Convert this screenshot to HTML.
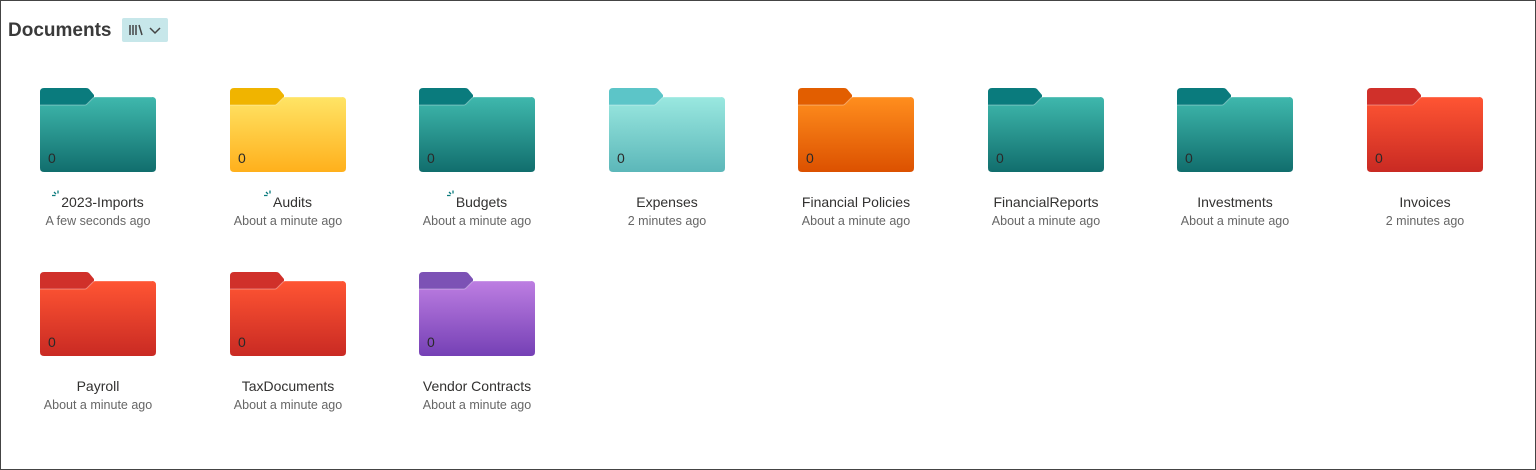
<!DOCTYPE html>
<html><head><meta charset="utf-8"><style>
html,body{margin:0;padding:0;}
body{width:1536px;height:470px;position:relative;background:#fff;font-family:"Liberation Sans",sans-serif;overflow:hidden;}
.frame{position:absolute;left:0;top:0;width:1534px;height:468px;border:1px solid #444;}
h1{position:absolute;left:8px;top:20px;margin:0;font-size:19px;font-weight:bold;color:#3a3a3a;}
.vb{position:absolute;left:122px;top:18px;width:46px;height:24px;background:#c7e7ea;border-radius:2px;}
.card{position:absolute;width:190px;}
.fold{position:absolute;left:37px;top:0;}
.zero{position:absolute;left:45px;top:62px;font-size:14px;color:#2a2a2a;}
.name{position:absolute;top:106px;left:0;width:100%;text-align:center;font-size:14px;color:#323130;}
.date{position:absolute;top:126px;left:0;width:100%;text-align:center;font-size:12.5px;color:#666;}
.spin{display:inline-block;width:9px;height:10px;vertical-align:top;margin-top:-4px;margin-right:0px;}
</style></head><body>
<div class="frame"></div>
<h1>Documents</h1>
<div class="vb"><svg width="46" height="24"><g stroke="#444" stroke-width="1.5" fill="none"><path d="M8 7v10M11 7v10M14 7v10M17 7l3 10"/><path d="M28 10l5 5 5-5"/></g></svg></div>
<svg width="0" height="0" style="position:absolute"><defs>
<linearGradient id="gt" x1="0" y1="0" x2="0" y2="1"><stop offset="0" stop-color="#3fb8ad"/><stop offset="1" stop-color="#116e6d"/></linearGradient>
<linearGradient id="gy" x1="0" y1="0" x2="0" y2="1"><stop offset="0" stop-color="#ffe465"/><stop offset="1" stop-color="#ffb01c"/></linearGradient>
<linearGradient id="gl" x1="0" y1="0" x2="0" y2="1"><stop offset="0" stop-color="#9ae8e0"/><stop offset="1" stop-color="#5cb7b9"/></linearGradient>
<linearGradient id="go" x1="0" y1="0" x2="0" y2="1"><stop offset="0" stop-color="#ff8e1e"/><stop offset="1" stop-color="#dc5100"/></linearGradient>
<linearGradient id="gr" x1="0" y1="0" x2="0" y2="1"><stop offset="0" stop-color="#ff5533"/><stop offset="1" stop-color="#c92a23"/></linearGradient>
<linearGradient id="gp" x1="0" y1="0" x2="0" y2="1"><stop offset="0" stop-color="#bd7ee2"/><stop offset="1" stop-color="#7540b5"/></linearGradient>
</defs></svg>

<div id="c"></div>
<script>
var items=[
["2023-Imports","A few seconds ago","#0a7b7d","gt",1],
["Audits","About a minute ago","#f0b400","gy",1],
["Budgets","About a minute ago","#0a7b7d","gt",1],
["Expenses","2 minutes ago","#5cc5c8","gl",0],
["Financial Policies","About a minute ago","#e25e00","go",0],
["FinancialReports","About a minute ago","#0a7b7d","gt",0],
["Investments","About a minute ago","#0a7b7d","gt",0],
["Invoices","2 minutes ago","#d0302a","gr",0],
["Payroll","About a minute ago","#d0302a","gr",0],
["TaxDocuments","About a minute ago","#d0302a","gr",0],
["Vendor Contracts","About a minute ago","#7c52b5","gp",0]];
var xs=[40,230,419,609,798,988,1177,1367],h="";
items.forEach(function(it,i){
 var r=i<8?0:1,col=i<8?i:i-8,x=xs[col]-37,y=r?272:88;
 var sp=it[4]?'<svg class="spin" viewBox="0 0 9 10"><g stroke="#0a7b7d" stroke-width="1.3" fill="none"><path d="M0 5.5h3.5M2 2l2 2M6 0.5v3"/></g></svg>':'';
 h+='<div class="card" style="left:'+x+'px;top:'+y+'px"><svg class="fold" width="116" height="84" viewBox="0 0 116 84">'+
 '<path d="M0 4Q0 0 4 0H46Q48 0 49 1L54 7V30H0Z" fill="'+it[2]+'"/>'+
 '<path d="M0 17H45Q46 17 47 16L53 10Q54 9 55 9H112Q116 9 116 13V80Q116 84 112 84H4Q0 84 0 80Z" fill="url(#'+it[3]+')"/>'+
 '<path d="M0 17H45Q46 17 47 16L53 10Q54 9 55 9H112" stroke="rgba(255,255,255,0.35)" fill="none" stroke-width="1"/>'+
 '</svg><div class="zero">0</div><div class="name">'+sp+it[0]+'</div><div class="date">'+it[1]+'</div></div>';
});
document.getElementById("c").innerHTML=h;
</script>
</body></html>
